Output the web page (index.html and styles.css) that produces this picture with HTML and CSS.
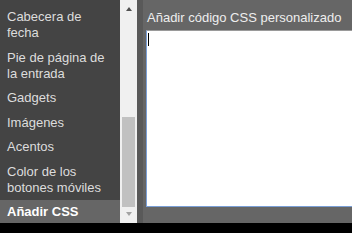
FILE: index.html
```html
<!DOCTYPE html>
<html lang="es">
<head>
    <meta charset="UTF-8">
    <meta name="viewport" content="width=device-width, initial-scale=1.0">
    <title>Añadir CSS</title>
    <link rel="stylesheet" href="styles.css">
</head>
<body>
    <div class="layout">
        <div class="sidebar">
            <ul class="menu">
                <li>Cabecera de fecha</li>
                <li>Pie de página de la entrada</li>
                <li>Gadgets</li>
                <li>Imágenes</li>
                <li>Acentos</li>
                <li>Color de los botones móviles</li>
                <li class="active">Añadir CSS</li>
            </ul>
        </div>
        <div class="scrollbar">
            <span class="arrow up"></span>
            <span class="thumb"></span>
            <span class="arrow down"></span>
        </div>
        <div class="main">
            <label for="customCss">Añadir código CSS personalizado</label>
            <div class="editor">
                <textarea id="customCss"></textarea>
                <span class="caret"></span>
            </div>
        </div>
    </div>
</body>
</html>
```

FILE: styles.css
```css
html, body {
    margin: 0;
    padding: 0;
    background-color: #000;
}
body {
    font-family: "Liberation Sans", Arial, sans-serif;
    font-size: 13px;
    line-height: 16px;
    width: 352px;
    height: 233px;
    overflow: hidden;
}
.layout {
    display: flex;
    height: 223px;
}
.sidebar {
    width: 120px;
    background-color: #444;
    overflow: hidden;
    padding-top: 5px;
    box-sizing: border-box;
}
.menu {
    list-style: none;
    margin: 0;
    padding: 0;
}
.menu li {
    color: #ddd;
    padding: 4px 6px 4.5px 7px;
}
.menu li.active {
    background-color: #666;
    color: #fff;
    font-weight: bold;
}
.scrollbar {
    width: 17px;
    background-color: #f0f0f0;
    display: flex;
    flex-direction: column;
    align-items: center;
}
.arrow {
    width: 0;
    height: 0;
    border-left: 3.5px solid transparent;
    border-right: 3.5px solid transparent;
}
.arrow.up {
    margin-top: 7px;
    border-bottom: 4px solid #505050;
}
.arrow.down {
    margin-top: 5px;
    border-top: 4px solid #a3a3a3;
}
.thumb {
    width: 13px;
    height: 90px;
    margin-top: 106px;
    background-color: #c1c1c1;
}
.main {
    flex: 1;
    background-color: #666;
    border-left: 6px solid #595959;
    padding: 10px 0 0 3px;
    overflow: hidden;
}
label {
    display: block;
    color: #eee;
    padding-left: 1px;
    margin-bottom: 4px;
    white-space: nowrap;
}
.editor {
    position: relative;
    width: 230px;
}
textarea {
    display: block;
    width: 100%;
    height: 177px;
    box-sizing: border-box;
    margin: 0;
    padding: 2px;
    border: 1px solid #7a9fd6;
    border-top-color: #9a9a9a;
    background-color: #fff;
    resize: none;
    outline: none;
}
.caret {
    position: absolute;
    left: 2px;
    top: 3px;
    width: 1px;
    height: 13px;
    background-color: #000;
}
```
